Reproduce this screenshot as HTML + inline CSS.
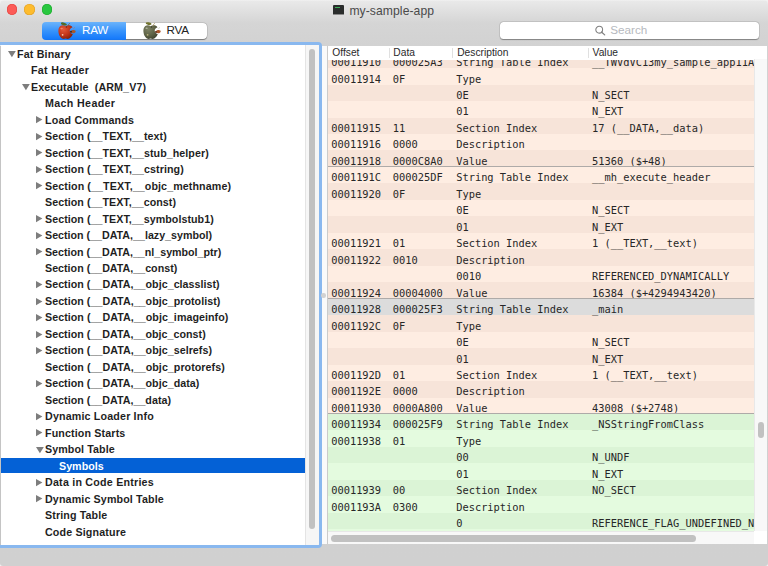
<!DOCTYPE html><html><head><meta charset="utf-8"><title>my-sample-app</title><style>
*{box-sizing:border-box;margin:0;padding:0}
html,body{width:768px;height:566px;overflow:hidden;background:#f2f2f2}
body{position:relative;font-family:"Liberation Sans",sans-serif;color:#1c1c1c}
#win{position:absolute;left:0;top:0;width:768px;height:566px;border-radius:4.5px 4.5px 3px 3px;overflow:hidden;background:linear-gradient(#f4f4f4 0,#e9e9e9 1px,#d5d5d5 23px,#d2d2d2 45px,#d0d0d0 100%)}
.tl{position:absolute;top:4.2px;width:10.4px;height:10.4px;border-radius:50%}
#title{position:absolute;left:349.4px;top:2.6px;font-size:12.15px;color:#4a4a4a;letter-spacing:0.08px;white-space:nowrap;line-height:16px}
#ticon{position:absolute;left:333px;top:4.5px;width:11px;height:10px;background:#2a2d2c;border-radius:1px;border-bottom:1.5px solid #8a8a8a}
#ticon i{position:absolute;left:2px;top:2px;width:4.5px;height:1px;background:#3fae5a}
#seg{position:absolute;left:42px;top:22px;width:165.2px;height:18px}
#seg .w{position:absolute;left:80px;top:0.6px;width:85.2px;height:16.3px;border-radius:0 4px 4px 0;background:#fff;box-shadow:0 0.6px 0.8px rgba(0,0,0,.38),0 0 0 0.6px rgba(0,0,0,.13)}
#seg .a{position:absolute;left:-0.3px;top:-0.2px;width:84.3px;height:18.2px;border-radius:4px 0 0 4px;background:linear-gradient(#6bb3fb,#3793fb 50%,#167afb 94%,#1672ea)}
#seg span{position:absolute;top:-0.6px;line-height:18px;font-size:11.7px;letter-spacing:-0.25px}
#search{position:absolute;left:500px;top:21.8px;width:258.6px;height:17.3px;border-radius:3.5px;background:#fff;box-shadow:0 0.5px 1px rgba(0,0,0,.35),0 0 0 0.5px rgba(0,0,0,.12)}
#search span{position:absolute;left:110.3px;top:-0.5px;line-height:17.6px;font-size:11.7px;color:#b6b9be}
#left{position:absolute;left:-3px;top:42px;width:324.7px;height:505.8px;border:3px solid #89b8ef;border-radius:4px;background:#fff;overflow:hidden}
#lin{position:absolute;left:0;top:-45px;width:330px;height:566px}
.ti{position:absolute;left:0;width:305px;height:16.45px;line-height:16.45px;font-weight:bold;white-space:nowrap;color:#1f1f1f}
.ti.sel{background:#0461d6;color:#fff}
.ti.sel:after{content:'';position:absolute;left:0;bottom:0;width:100%;height:1.2px;background:#fff}
#ledge{position:absolute;left:0;top:45.5px;width:0.8px;height:499px;background:#c4c4c4}
.ti span{position:absolute;top:0}
.ar{position:absolute;overflow:visible}
#lsb{position:absolute;left:305px;top:45px;width:14px;height:500px;background:#f6f6f6;border-left:1px solid #e4e4e4}
#lsb i{position:absolute;left:2.7px;top:3.5px;width:6.7px;height:480.6px;border-radius:3.5px;background:#c1c1c1}
#split{position:absolute;left:321.7px;top:45.6px;width:6.3px;height:498.1px;background:#fafafa}
#split i{position:absolute;left:-0.5px;top:247.8px;width:4.4px;height:4.4px;border-radius:50%;background:#d2d2d2}
#right{position:absolute;left:327.2px;top:45.7px;width:439.7px;height:498px;background:#fff;overflow:hidden;border-left:1px solid #cbcbcb}
#rin{position:absolute;left:-328.2px;top:-45.7px;width:768px;height:566px}
#hdr{position:absolute;left:328px;top:45.7px;width:440px;height:13.9px;background:#fff}
#hdr span{position:absolute;top:0.6px;line-height:13.5px;font-size:10.25px;color:#2a2a2a}
#hdr i{position:absolute;top:2px;width:1px;height:10.5px;background:#e0e0e0}
.row{position:absolute;left:328.2px;width:426px;overflow:hidden;height:21px;line-height:16.47px;font-family:"DejaVu Sans Mono","Liberation Mono",monospace;white-space:nowrap;color:#272727}
.row span{position:absolute;top:2.4px}
.rbg{position:absolute;left:328.2px;width:426px;height:16.6px}
.sep{position:absolute;left:328.2px;width:426px;height:1px;background:#aeaaa8}
#vsb{position:absolute;left:754.2px;top:59.2px;width:13.2px;height:472px;background:#f8f8f8;border-left:1px solid #e8e8e8}
#vsb i{position:absolute;left:2.6px;top:362.6px;width:6.5px;height:16.5px;border-radius:3.5px;background:#c1c1c1}
#hsb{position:absolute;left:328.2px;top:531.3px;width:426px;height:13px;background:#f8f8f8;border-top:1px solid #e8e8e8}
#hsb i{position:absolute;left:2.6px;top:3px;width:365px;height:6.6px;border-radius:3.5px;background:#c1c1c1}
#corner{position:absolute;left:754.2px;top:531px;width:14px;height:13px;background:#fff}
</style></head><body><div id="win">
<div class="tl" style="left:6.9px;background:#fc5b57;box-shadow:inset 0 0 0 0.6px #e2443f"></div>
<div class="tl" style="left:24.3px;background:#fdbc2e;box-shadow:inset 0 0 0 0.6px #e0a028"></div>
<div class="tl" style="left:41.6px;background:#29c740;box-shadow:inset 0 0 0 0.6px #1fab2e"></div>
<div id="ticon"><i></i></div><div id="title">my-sample-app</div>
<div id="seg"><div class="w"></div><div class="a"></div><svg style="position:absolute;left:15px;top:-1px;overflow:visible" width="20" height="19" viewBox="0 0 20 19"><defs><radialGradient id="ag1" cx="0.35" cy="0.3" r="0.8"><stop offset="0" stop-color="#e35a3a"/><stop offset="0.55" stop-color="#c23418"/><stop offset="1" stop-color="#78200c"/></radialGradient></defs><path d="M8.6 5.2C6.6 3.5 2.6 3.9 1.6 7.8C0.8 11.5 2.4 16 5 17.5C6.5 18.3 7.5 17.6 8.6 17.6C9.6 17.6 10.8 18.3 12.3 17.5C14 16.5 15.3 14.7 15.8 13.1C13.5 12.6 12.3 10.6 12.8 8.8C13.2 7.4 14.3 6.7 15.5 6.2C13.8 3.7 10.6 3.7 8.6 5.2Z" fill="url(#ag1)"/><ellipse cx="6.9" cy="2.9" rx="3.1" ry="1.3" transform="rotate(14 6.9 2.9)" fill="#506b25"/><path d="M10.9 5.2C11.2 4 11.8 3 12.7 2.2" stroke="#7d5a2c" stroke-width="0.8" fill="none"/><path d="M13.6 10.6C14.6 9 17 8.6 18.6 9.7C18.9 10.6 18.3 11.8 17 12.2C15.6 12.6 14.2 12 13.6 10.6Z" fill="#a9562b"/><circle cx="14" cy="10.7" r="1" fill="#4a2616"/><path d="M16.3 7.6C16.9 6.8 17.5 6.6 18 6.9" stroke="#b0705a" stroke-width="0.6" fill="none"/><circle cx="5.6" cy="13.8" r="0.9" fill="#fbe3c8" opacity="0.85"/><ellipse cx="4.6" cy="7.6" rx="1.3" ry="0.8" fill="#f7a184" opacity="0.7"/><circle cx="9.4" cy="6" r="0.8" fill="#5a2414" opacity="0.8"/></svg>
<span style="left:40px;color:#fff">RAW</span><svg style="position:absolute;left:100px;top:-1px;overflow:visible" width="20" height="19" viewBox="0 0 20 19"><defs><radialGradient id="ag2" cx="0.35" cy="0.3" r="0.8"><stop offset="0" stop-color="#7d8264"/><stop offset="0.6" stop-color="#5c6044"/><stop offset="1" stop-color="#3d402c"/></radialGradient></defs><path d="M8.6 5.2C6.6 3.5 2.6 3.9 1.6 7.8C0.8 11.5 2.4 16 5 17.5C6.5 18.3 7.5 17.6 8.6 17.6C9.6 17.6 10.8 18.3 12.3 17.5C14 16.5 15.3 14.7 15.8 13.1C13.5 12.6 12.3 10.6 12.8 8.8C13.2 7.4 14.3 6.7 15.5 6.2C13.8 3.7 10.6 3.7 8.6 5.2Z" fill="url(#ag2)"/><ellipse cx="6.6" cy="2.6" rx="3" ry="1.3" transform="rotate(10 6.6 2.6)" fill="#73752f"/><path d="M10.9 5.2C11.2 4 11.8 3 12.7 2.2" stroke="#a08a55" stroke-width="0.8" fill="none"/><path d="M13.6 10.6C14.6 9 17 8.6 18.6 9.7C18.9 10.6 18.3 11.8 17 12.2C15.6 12.6 14.2 12 13.6 10.6Z" fill="#a9562b"/><circle cx="14" cy="10.9" r="1" fill="#5a3020"/><path d="M16.3 7.6C16.9 6.8 17.5 6.6 18 6.9" stroke="#a9a99a" stroke-width="0.6" fill="none"/><circle cx="5.6" cy="13.8" r="0.9" fill="#c8bf84" opacity="0.85"/><ellipse cx="4.6" cy="7.2" rx="1.2" ry="0.7" fill="#c9ccb8" opacity="0.7"/><circle cx="9.4" cy="6" r="0.8" fill="#2e3022" opacity="0.8"/></svg>
<span style="left:124.5px;color:#222">RVA</span></div>
<div id="search"><svg style="position:absolute;left:94px;top:3.6px;overflow:visible" width="12" height="12" viewBox="0 0 12 12"><circle cx="5.2" cy="4.7" r="3.4" fill="none" stroke="#808080" stroke-width="1.05"/><path d="M7.7 7.2L10.7 9.9" stroke="#808080" stroke-width="1.25" stroke-linecap="round"/></svg>
<span>Search</span></div>
<div id="left"><div id="lin">
<div class="ti" style="top:45.85px;font-size:10.7px"><svg class="ar" style="left:7.699999999999999px;top:5.4px" width="8" height="7" viewBox="0 0 8 7"><path d="M0 0L7.8 0L3.9 6.2Z" fill="#7d7d7d"/></svg><span style="left:17px;letter-spacing:0.159px">Fat Binary</span></div>
<div class="ti" style="top:62.32px;font-size:10.7px"><span style="left:31px;letter-spacing:0.306px">Fat Header</span></div>
<div class="ti" style="top:78.80px;font-size:10.7px"><svg class="ar" style="left:21.7px;top:5.4px" width="8" height="7" viewBox="0 0 8 7"><path d="M0 0L7.8 0L3.9 6.2Z" fill="#7d7d7d"/></svg><span style="left:31px;letter-spacing:0.113px">Executable  (ARM_V7)</span></div>
<div class="ti" style="top:95.27px;font-size:10.7px"><span style="left:45px;letter-spacing:0.347px">Mach Header</span></div>
<div class="ti" style="top:111.75px;font-size:10.7px"><svg class="ar" style="left:36.2px;top:4.7px" width="7" height="8" viewBox="0 0 7 8"><path d="M0 0L6.4 3.6L0 7.2Z" fill="#7d7d7d"/></svg><span style="left:45px;letter-spacing:0.191px">Load Commands</span></div>
<div class="ti" style="top:128.22px;font-size:10.7px"><svg class="ar" style="left:36.2px;top:4.7px" width="7" height="8" viewBox="0 0 7 8"><path d="M0 0L6.4 3.6L0 7.2Z" fill="#7d7d7d"/></svg><span style="left:45px;letter-spacing:0.051px">Section (__TEXT,__text)</span></div>
<div class="ti" style="top:144.69px;font-size:10.7px"><svg class="ar" style="left:36.2px;top:4.7px" width="7" height="8" viewBox="0 0 7 8"><path d="M0 0L6.4 3.6L0 7.2Z" fill="#7d7d7d"/></svg><span style="left:45px;letter-spacing:0.054px">Section (__TEXT,__stub_helper)</span></div>
<div class="ti" style="top:161.17px;font-size:10.7px"><svg class="ar" style="left:36.2px;top:4.7px" width="7" height="8" viewBox="0 0 7 8"><path d="M0 0L6.4 3.6L0 7.2Z" fill="#7d7d7d"/></svg><span style="left:45px;letter-spacing:0.060px">Section (__TEXT,__cstring)</span></div>
<div class="ti" style="top:177.64px;font-size:10.7px"><svg class="ar" style="left:36.2px;top:4.7px" width="7" height="8" viewBox="0 0 7 8"><path d="M0 0L6.4 3.6L0 7.2Z" fill="#7d7d7d"/></svg><span style="left:45px;letter-spacing:0.099px">Section (__TEXT,__objc_methname)</span></div>
<div class="ti" style="top:194.12px;font-size:10.7px"><span style="left:45px;letter-spacing:0.040px">Section (__TEXT,__const)</span></div>
<div class="ti" style="top:210.59px;font-size:10.7px"><svg class="ar" style="left:36.2px;top:4.7px" width="7" height="8" viewBox="0 0 7 8"><path d="M0 0L6.4 3.6L0 7.2Z" fill="#7d7d7d"/></svg><span style="left:45px;letter-spacing:0.042px">Section (__TEXT,__symbolstub1)</span></div>
<div class="ti" style="top:227.06px;font-size:10.7px"><svg class="ar" style="left:36.2px;top:4.7px" width="7" height="8" viewBox="0 0 7 8"><path d="M0 0L6.4 3.6L0 7.2Z" fill="#7d7d7d"/></svg><span style="left:45px;letter-spacing:-0.003px">Section (__DATA,__lazy_symbol)</span></div>
<div class="ti" style="top:243.54px;font-size:10.7px"><svg class="ar" style="left:36.2px;top:4.7px" width="7" height="8" viewBox="0 0 7 8"><path d="M0 0L6.4 3.6L0 7.2Z" fill="#7d7d7d"/></svg><span style="left:45px;letter-spacing:-0.009px">Section (__DATA,__nl_symbol_ptr)</span></div>
<div class="ti" style="top:260.01px;font-size:10.7px"><span style="left:45px;letter-spacing:0.011px">Section (__DATA,__const)</span></div>
<div class="ti" style="top:276.49px;font-size:10.7px"><svg class="ar" style="left:36.2px;top:4.7px" width="7" height="8" viewBox="0 0 7 8"><path d="M0 0L6.4 3.6L0 7.2Z" fill="#7d7d7d"/></svg><span style="left:45px;letter-spacing:0.033px">Section (__DATA,__objc_classlist)</span></div>
<div class="ti" style="top:292.96px;font-size:10.7px"><svg class="ar" style="left:36.2px;top:4.7px" width="7" height="8" viewBox="0 0 7 8"><path d="M0 0L6.4 3.6L0 7.2Z" fill="#7d7d7d"/></svg><span style="left:45px;letter-spacing:0.035px">Section (__DATA,__objc_protolist)</span></div>
<div class="ti" style="top:309.43px;font-size:10.7px"><svg class="ar" style="left:36.2px;top:4.7px" width="7" height="8" viewBox="0 0 7 8"><path d="M0 0L6.4 3.6L0 7.2Z" fill="#7d7d7d"/></svg><span style="left:45px;letter-spacing:0.043px">Section (__DATA,__objc_imageinfo)</span></div>
<div class="ti" style="top:325.91px;font-size:10.7px"><svg class="ar" style="left:36.2px;top:4.7px" width="7" height="8" viewBox="0 0 7 8"><path d="M0 0L6.4 3.6L0 7.2Z" fill="#7d7d7d"/></svg><span style="left:45px;letter-spacing:0.027px">Section (__DATA,__objc_const)</span></div>
<div class="ti" style="top:342.38px;font-size:10.7px"><svg class="ar" style="left:36.2px;top:4.7px" width="7" height="8" viewBox="0 0 7 8"><path d="M0 0L6.4 3.6L0 7.2Z" fill="#7d7d7d"/></svg><span style="left:45px;letter-spacing:0.036px">Section (__DATA,__objc_selrefs)</span></div>
<div class="ti" style="top:358.86px;font-size:10.7px"><span style="left:45px;letter-spacing:0.042px">Section (__DATA,__objc_protorefs)</span></div>
<div class="ti" style="top:375.33px;font-size:10.7px"><svg class="ar" style="left:36.2px;top:4.7px" width="7" height="8" viewBox="0 0 7 8"><path d="M0 0L6.4 3.6L0 7.2Z" fill="#7d7d7d"/></svg><span style="left:45px;letter-spacing:0.033px">Section (__DATA,__objc_data)</span></div>
<div class="ti" style="top:391.80px;font-size:10.7px"><span style="left:45px;letter-spacing:0.022px">Section (__DATA,__data)</span></div>
<div class="ti" style="top:408.28px;font-size:10.7px"><svg class="ar" style="left:36.2px;top:4.7px" width="7" height="8" viewBox="0 0 7 8"><path d="M0 0L6.4 3.6L0 7.2Z" fill="#7d7d7d"/></svg><span style="left:45px;letter-spacing:0.166px">Dynamic Loader Info</span></div>
<div class="ti" style="top:424.75px;font-size:10.7px"><svg class="ar" style="left:36.2px;top:4.7px" width="7" height="8" viewBox="0 0 7 8"><path d="M0 0L6.4 3.6L0 7.2Z" fill="#7d7d7d"/></svg><span style="left:45px;letter-spacing:0.136px">Function Starts</span></div>
<div class="ti" style="top:441.23px;font-size:10.7px"><svg class="ar" style="left:35.7px;top:5.4px" width="8" height="7" viewBox="0 0 8 7"><path d="M0 0L7.8 0L3.9 6.2Z" fill="#7d7d7d"/></svg><span style="left:45px;letter-spacing:0.091px">Symbol Table</span></div>
<div class="ti sel" style="top:457.70px;font-size:10.7px"><span style="left:59px;letter-spacing:0.026px">Symbols</span></div>
<div class="ti" style="top:474.17px;font-size:10.7px"><svg class="ar" style="left:36.2px;top:4.7px" width="7" height="8" viewBox="0 0 7 8"><path d="M0 0L6.4 3.6L0 7.2Z" fill="#7d7d7d"/></svg><span style="left:45px;letter-spacing:0.219px">Data in Code Entries</span></div>
<div class="ti" style="top:490.65px;font-size:10.7px"><svg class="ar" style="left:36.2px;top:4.7px" width="7" height="8" viewBox="0 0 7 8"><path d="M0 0L6.4 3.6L0 7.2Z" fill="#7d7d7d"/></svg><span style="left:45px;letter-spacing:0.131px">Dynamic Symbol Table</span></div>
<div class="ti" style="top:507.12px;font-size:10.7px"><span style="left:45px;letter-spacing:0.121px">String Table</span></div>
<div class="ti" style="top:523.60px;font-size:10.7px"><span style="left:45px;letter-spacing:0.155px">Code Signature</span></div>
<div id="lsb"><i></i></div>
</div></div>
<div id="ledge"></div><div id="split"><i></i></div>
<div id="right"><div id="rin">
<div class="rbg" style="top:51.66px;background:#f7e4d9"></div>
<div class="rbg" style="top:68.13px;background:#feede2"></div>
<div class="rbg" style="top:84.60px;background:#f7e4d9"></div>
<div class="rbg" style="top:101.07px;background:#feede2"></div>
<div class="rbg" style="top:117.54px;background:#f7e4d9"></div>
<div class="rbg" style="top:134.01px;background:#feede2"></div>
<div class="rbg" style="top:150.48px;background:#f7e4d9"></div>
<div class="rbg" style="top:166.95px;background:#feede2"></div>
<div class="rbg" style="top:183.42px;background:#f7e4d9"></div>
<div class="rbg" style="top:199.89px;background:#feede2"></div>
<div class="rbg" style="top:216.36px;background:#f7e4d9"></div>
<div class="rbg" style="top:232.83px;background:#feede2"></div>
<div class="rbg" style="top:249.30px;background:#f7e4d9"></div>
<div class="rbg" style="top:265.77px;background:#feede2"></div>
<div class="rbg" style="top:282.24px;background:#f7e4d9"></div>
<div class="rbg" style="top:298.71px;background:#dcdcdc"></div>
<div class="rbg" style="top:315.18px;background:#f7e4d9"></div>
<div class="rbg" style="top:331.65px;background:#feede2"></div>
<div class="rbg" style="top:348.12px;background:#f7e4d9"></div>
<div class="rbg" style="top:364.59px;background:#feede2"></div>
<div class="rbg" style="top:381.06px;background:#f7e4d9"></div>
<div class="rbg" style="top:397.53px;background:#feede2"></div>
<div class="rbg" style="top:414.00px;background:#dbf4d6"></div>
<div class="rbg" style="top:430.47px;background:#e4fbdf"></div>
<div class="rbg" style="top:446.94px;background:#dbf4d6"></div>
<div class="rbg" style="top:463.41px;background:#e4fbdf"></div>
<div class="rbg" style="top:479.88px;background:#dbf4d6"></div>
<div class="rbg" style="top:496.35px;background:#e4fbdf"></div>
<div class="rbg" style="top:512.82px;background:#dbf4d6"></div>
<div class="rbg" style="top:529.29px;background:#e4fbdf"></div>
<div class="row" style="top:51.66px;font-size:10.36px"><span style="left:3.0px">00011910</span><span style="left:64.6px">000025A3</span><span style="left:128.0px">String Table Index</span><span style="left:263.8px">__TWVdVC13my_sample_app11A</span></div>
<div class="row" style="top:68.13px;font-size:10.36px"><span style="left:3.0px">00011914</span><span style="left:64.6px">0F</span><span style="left:128.0px">Type</span></div>
<div class="row" style="top:84.60px;font-size:10.36px"><span style="left:128.0px">0E</span><span style="left:263.8px">N_SECT</span></div>
<div class="row" style="top:101.07px;font-size:10.36px"><span style="left:128.0px">01</span><span style="left:263.8px">N_EXT</span></div>
<div class="row" style="top:117.54px;font-size:10.36px"><span style="left:3.0px">00011915</span><span style="left:64.6px">11</span><span style="left:128.0px">Section Index</span><span style="left:263.8px">17 (__DATA,__data)</span></div>
<div class="row" style="top:134.01px;font-size:10.36px"><span style="left:3.0px">00011916</span><span style="left:64.6px">0000</span><span style="left:128.0px">Description</span></div>
<div class="row" style="top:150.48px;font-size:10.36px"><span style="left:3.0px">00011918</span><span style="left:64.6px">0000C8A0</span><span style="left:128.0px">Value</span><span style="left:263.8px">51360 ($+48)</span></div>
<div class="row" style="top:166.95px;font-size:10.36px"><span style="left:3.0px">0001191C</span><span style="left:64.6px">000025DF</span><span style="left:128.0px">String Table Index</span><span style="left:263.8px">__mh_execute_header</span></div>
<div class="row" style="top:183.42px;font-size:10.36px"><span style="left:3.0px">00011920</span><span style="left:64.6px">0F</span><span style="left:128.0px">Type</span></div>
<div class="row" style="top:199.89px;font-size:10.36px"><span style="left:128.0px">0E</span><span style="left:263.8px">N_SECT</span></div>
<div class="row" style="top:216.36px;font-size:10.36px"><span style="left:128.0px">01</span><span style="left:263.8px">N_EXT</span></div>
<div class="row" style="top:232.83px;font-size:10.36px"><span style="left:3.0px">00011921</span><span style="left:64.6px">01</span><span style="left:128.0px">Section Index</span><span style="left:263.8px">1 (__TEXT,__text)</span></div>
<div class="row" style="top:249.30px;font-size:10.36px"><span style="left:3.0px">00011922</span><span style="left:64.6px">0010</span><span style="left:128.0px">Description</span></div>
<div class="row" style="top:265.77px;font-size:10.36px"><span style="left:128.0px">0010</span><span style="left:263.8px">REFERENCED_DYNAMICALLY</span></div>
<div class="row" style="top:282.24px;font-size:10.36px"><span style="left:3.0px">00011924</span><span style="left:64.6px">00004000</span><span style="left:128.0px">Value</span><span style="left:263.8px">16384 ($+4294943420)</span></div>
<div class="row" style="top:298.71px;font-size:10.36px"><span style="left:3.0px">00011928</span><span style="left:64.6px">000025F3</span><span style="left:128.0px">String Table Index</span><span style="left:263.8px">_main</span></div>
<div class="row" style="top:315.18px;font-size:10.36px"><span style="left:3.0px">0001192C</span><span style="left:64.6px">0F</span><span style="left:128.0px">Type</span></div>
<div class="row" style="top:331.65px;font-size:10.36px"><span style="left:128.0px">0E</span><span style="left:263.8px">N_SECT</span></div>
<div class="row" style="top:348.12px;font-size:10.36px"><span style="left:128.0px">01</span><span style="left:263.8px">N_EXT</span></div>
<div class="row" style="top:364.59px;font-size:10.36px"><span style="left:3.0px">0001192D</span><span style="left:64.6px">01</span><span style="left:128.0px">Section Index</span><span style="left:263.8px">1 (__TEXT,__text)</span></div>
<div class="row" style="top:381.06px;font-size:10.36px"><span style="left:3.0px">0001192E</span><span style="left:64.6px">0000</span><span style="left:128.0px">Description</span></div>
<div class="row" style="top:397.53px;font-size:10.36px"><span style="left:3.0px">00011930</span><span style="left:64.6px">0000A800</span><span style="left:128.0px">Value</span><span style="left:263.8px">43008 ($+2748)</span></div>
<div class="row" style="top:414.00px;font-size:10.36px"><span style="left:3.0px">00011934</span><span style="left:64.6px">000025F9</span><span style="left:128.0px">String Table Index</span><span style="left:263.8px">_NSStringFromClass</span></div>
<div class="row" style="top:430.47px;font-size:10.36px"><span style="left:3.0px">00011938</span><span style="left:64.6px">01</span><span style="left:128.0px">Type</span></div>
<div class="row" style="top:446.94px;font-size:10.36px"><span style="left:128.0px">00</span><span style="left:263.8px">N_UNDF</span></div>
<div class="row" style="top:463.41px;font-size:10.36px"><span style="left:128.0px">01</span><span style="left:263.8px">N_EXT</span></div>
<div class="row" style="top:479.88px;font-size:10.36px"><span style="left:3.0px">00011939</span><span style="left:64.6px">00</span><span style="left:128.0px">Section Index</span><span style="left:263.8px">NO_SECT</span></div>
<div class="row" style="top:496.35px;font-size:10.36px"><span style="left:3.0px">0001193A</span><span style="left:64.6px">0300</span><span style="left:128.0px">Description</span></div>
<div class="row" style="top:512.82px;font-size:10.36px"><span style="left:128.0px">0</span><span style="left:263.8px">REFERENCE_FLAG_UNDEFINED_N</span></div>
<div class="sep" style="top:166.25px"></div>
<div class="sep" style="top:298.01px"></div>
<div class="sep" style="top:413.30px"></div>
<div id="hdr"><span style="left:4.3px">Offset</span><span style="left:65.3px">Data</span><span style="left:129.2px">Description</span><span style="left:264.6px">Value</span><i style="left:61.2px"></i><i style="left:124.2px"></i><i style="left:260.4px"></i></div>
<div id="vsb"><i></i></div><div id="hsb"><i></i></div><div id="corner"></div>
</div></div>
</div></body></html>
